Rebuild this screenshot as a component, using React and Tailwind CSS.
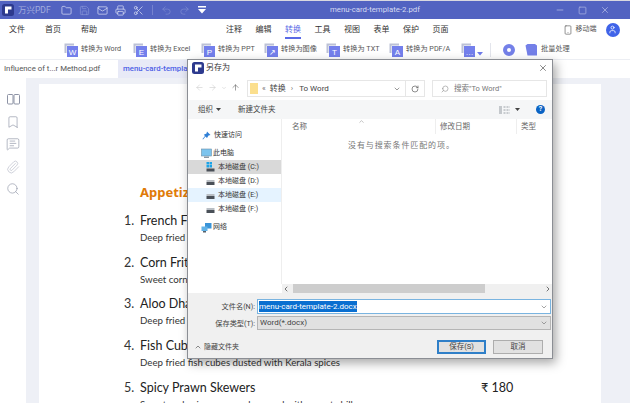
import {
  Bookmark,
  ChevronDown,
  ChevronLeft,
  ChevronRight,
  ChevronUp,
  Folder,
  Mail,
  MessageSquareText,
  Minus,
  Paperclip,
  Printer,
  Redo2,
  RotateCw,
  Save,
  Scissors,
  Search,
  Smartphone,
  Square,
  Undo2,
  User,
  X,
  ArrowLeft,
  ArrowRight,
  ArrowUp,
} from "lucide-react";

const UI_FONT = "font-['Roboto','Noto_Sans_CJK_SC',sans-serif]";

const leftMenu = ["文件", "首页", "帮助"];
const rightMenu = ["注释", "编辑", "转换", "工具", "视图", "表单", "保护", "页面"];

const tools = [
  { letter: "W", label: "转换为 Word", width: "w-[69px]" },
  { letter: "E", label: "转换为 Excel", width: "w-[68px]" },
  { letter: "P", label: "转换为 PPT", width: "w-[63px]" },
  { letter: "↗", label: "转换为图像", width: "w-[62px]" },
  { letter: "T", label: "转换为 TXT", width: "w-[63px]" },
  { letter: "A", label: "转换为 PDF/A", width: "w-[72px]" },
];

const menuItems = [
  { num: "1.", name: "French Fries", desc: "Deep fried potato fingers" },
  { num: "2.", name: "Corn Fritters", desc: "Sweet corn fritters" },
  { num: "3.", name: "Aloo Dhania", desc: "Deep fried potato with coriander" },
  { num: "4.", name: "Fish Cubes", desc: "Deep fried fish cubes dusted with Kerala spices" },
  {
    num: "5.",
    name: "Spicy Prawn Skewers",
    desc: "Sweet and spicy prawns skewered with sweet chilly sauce",
    price: "180",
  },
];

function ConvertIcon({ letter }) {
  return (
    <svg width="14" height="14" viewBox="0 0 14 14" className="shrink-0">
      <path d="M0.5 0.5H10V2.5H2.5V10H0.5Z" fill="#bcc1d6" />
      <rect x="3" y="3" width="11" height="11" fill="#7480ec" />
      <text x="8.5" y="12" fontSize="8" fill="#fff" textAnchor="middle" fontFamily="Liberation Sans">
        {letter}
      </text>
    </svg>
  );
}

function AppLogo() {
  return (
    <svg width="12" height="12" viewBox="0 0 12 12" className="shrink-0">
      <rect width="12" height="12" rx="2.5" fill="#2d3a8e" />
      <path d="M3 2.5H9.5V5.5H6V9.5H3Z" fill="#fff" />
    </svg>
  );
}

function DriveIcon() {
  return (
    <svg width="9" height="9" viewBox="0 0 9 9" className="shrink-0">
      <rect x="0.5" y="3" width="8" height="2" fill="#b9bec4" />
      <rect x="0.5" y="5" width="8" height="3" fill="#4a5058" />
    </svg>
  );
}

function SystemDriveIcon() {
  return (
    <svg width="9" height="10" viewBox="0 0 9 10" className="shrink-0">
      <rect x="0.5" y="0" width="2.5" height="2.5" fill="#1aa3e8" />
      <rect x="3.5" y="0" width="2.5" height="2.5" fill="#1aa3e8" />
      <rect x="0.5" y="3" width="2.5" height="2.5" fill="#1aa3e8" />
      <rect x="3.5" y="3" width="2.5" height="2.5" fill="#1aa3e8" />
      <rect x="0.5" y="6.5" width="8" height="3" fill="#4a5058" />
    </svg>
  );
}

function ComputerIcon() {
  return (
    <svg width="11" height="11" viewBox="0 0 11 11" className="shrink-0">
      <rect x="0.5" y="1" width="10" height="7" fill="#7cc4ee" stroke="#6c8fa8" strokeWidth="0.6" />
      <rect x="3" y="8.5" width="5" height="1.5" fill="#8a98a5" />
    </svg>
  );
}

function NetworkIcon() {
  return (
    <svg width="11" height="11" viewBox="0 0 11 11" className="shrink-0">
      <rect x="4" y="1" width="6.5" height="5.5" fill="#3a94d8" />
      <rect x="0.5" y="4.5" width="6" height="4.5" fill="#62b2e6" />
      <rect x="2" y="9" width="3" height="1.5" fill="#55606a" />
    </svg>
  );
}

function PinIcon() {
  return (
    <svg width="9" height="9" viewBox="0 0 9 9" className="shrink-0">
      <path d="M5 0.5L8.5 4L6.5 4.5L5 7L3.5 5.5L1 8.5L0.5 8L3 5L1.8 3.8L4.5 2.5Z" fill="#2f7fd6" />
    </svg>
  );
}

function ViewsIcon() {
  return (
    <svg width="11" height="8" viewBox="0 0 11 8">
      <path d="M0 0H3V8H0Z" fill="#c4c8cc" />
      <path d="M4.5 1H11M4.5 4H11M4.5 7H11" stroke="#9aa0a6" strokeDasharray="2 1" />
    </svg>
  );
}

function TreeRow({ icon, label, indent, gap = "gap-[3px]", bg = "", className = "" }) {
  return (
    <div className={`flex h-[14px] items-center ${gap} ${indent} ${bg} ${className}`}>
      {icon}
      <span className="whitespace-nowrap text-[7px] leading-[14px] text-[#333]">{label}</span>
    </div>
  );
}

function TitleBar() {
  const iconClass = "h-[11px] w-[11px] text-[#dfe3f6]";
  return (
    <div className="flex h-[18px] items-center bg-[#5263c1] px-[2px]">
      <AppLogo />
      <span className="ml-[4px] w-[30px] whitespace-nowrap text-[8.5px] text-[#a3adde]">万兴PDF</span>
      <div className="ml-[13px] flex items-center gap-[7px]">
        <Folder className={iconClass} strokeWidth={1.5} />
        <Save className="h-[11px] w-[11px] text-[#8996d8]" strokeWidth={1.5} />
        <Mail className={iconClass} strokeWidth={1.5} />
        <Printer className={iconClass} strokeWidth={1.5} />
        <Scissors className={iconClass} strokeWidth={1.5} />
      </div>
      <div className="ml-[8px] h-[10px] w-px bg-[#7582cf]" />
      <div className="ml-[8px] flex items-center gap-[7px]">
        <Undo2 className="h-[11px] w-[11px] text-[#7f8cd2]" strokeWidth={1.5} />
        <Redo2 className="h-[11px] w-[11px] text-[#7f8cd2]" strokeWidth={1.5} />
      </div>
      <svg width="10" height="9" viewBox="0 0 10 9" className="ml-[7px]">
        <path d="M1 0H9V1.5H1ZM1 3H9L5 7.5Z" fill="#fff" />
      </svg>
      <span className="ml-[123px] w-[225px] text-[7.8px] text-[#d5daf2]">menu-card-template-2.pdf</span>
      <div className="flex items-center gap-[13px] text-[#a9b2e2]">
        <Minus className="h-[10px] w-[10px]" />
        <Square className="h-[9px] w-[9px]" />
        <X className="h-[10px] w-[10px]" />
      </div>
    </div>
  );
}

function MenuBar() {
  return (
    <div className="flex h-[21px] items-center pl-[9px] text-[8px] text-[#333]">
      <div className="flex gap-[20px]">
        {leftMenu.map((m) => (
          <span key={m}>{m}</span>
        ))}
      </div>
      <div className="ml-[129px] flex gap-[13.5px]">
        {rightMenu.map((m) =>
          m === "转换" ? (
            <span key={m} className="relative text-[#5a6ae6]">
              {m}
              <span className="absolute -bottom-[3px] left-0 h-[1.5px] w-full bg-[#5a6ae6]" />
            </span>
          ) : (
            <span key={m}>{m}</span>
          ),
        )}
      </div>
      <Smartphone className="ml-[114px] h-[10px] w-[10px] text-[#555]" strokeWidth={1.5} />
      <span className="ml-[3px] text-[7px] text-[#555]">移动端</span>
      <div className="ml-[9px] flex h-[14px] w-[14px] items-center justify-center rounded-full bg-[#3f63e8]">
        <User className="h-[9px] w-[9px] text-white" strokeWidth={2} />
      </div>
    </div>
  );
}

function ToolBar() {
  return (
    <div className="flex h-[20px] items-center border-b border-[#eceef3] pl-[64px] text-[7.2px] text-[#555]">
      {tools.map((t) => (
        <div key={t.label} className={`flex items-center gap-[3px] ${t.width}`}>
          <ConvertIcon letter={t.letter} />
          <span className="whitespace-nowrap">{t.label}</span>
        </div>
      ))}
      <ConvertIcon letter="…" />
      <svg width="6" height="4" viewBox="0 0 6 4" className="ml-[2px] mt-[9px]">
        <path d="M0 0H6L3 3.5Z" fill="#6f7bea" />
      </svg>
      <div className="ml-[7px] h-[14px] w-px bg-[#e3e5ec]" />
      <svg width="12" height="12" viewBox="0 0 12 12" className="ml-[12px]">
        <circle cx="6" cy="6" r="4" fill="none" stroke="#7480e8" strokeWidth="4" />
      </svg>
      <svg width="12" height="12" viewBox="0 0 12 12" className="ml-[10px]">
        <path d="M0.5 1.5L2.5 0H10L12 1.5V11.5H2.5Z" fill="#7480e8" />
      </svg>
      <span className="ml-[4px]">批量处理</span>
    </div>
  );
}

function TabRow() {
  return (
    <div className="flex h-[18px] items-center text-[7.8px]">
      <div className="flex h-full w-[118px] items-center bg-white pl-[4px] text-[#555]">
        Influence of t...r Method.pdf
      </div>
      <div className="flex h-full w-[120px] items-center overflow-hidden whitespace-nowrap bg-[#e8eaf7] pl-[5px] font-medium text-[#4d5fe6]">
        menu-card-template-2.pdf
      </div>
      <div className="h-full flex-1 bg-white" />
    </div>
  );
}

function SideBar() {
  const cls = "h-[14px] w-[14px] text-[#8d93a5]";
  return (
    <div className="flex w-[26px] flex-col items-center gap-[8.5px] bg-white pt-[14px]">
      <svg width="13" height="14" viewBox="0 0 13 14" fill="none" stroke="#8d93a5">
        <rect x="0.5" y="2.5" width="5.5" height="9.5" rx="1" />
        <rect x="7" y="2.5" width="5.5" height="9.5" rx="1" />
      </svg>
      <Bookmark className={cls} strokeWidth={1.1} />
      <MessageSquareText className={cls} strokeWidth={1.1} />
      <Paperclip className="h-[14px] w-[14px] text-[#b5b9c6]" strokeWidth={1.1} />
      <Search className={cls} strokeWidth={1.1} />
    </div>
  );
}

function PdfPage() {
  return (
    <div className="h-[319px] flex-1 overflow-hidden bg-white pl-[85px] pr-[50px] pt-[100px] font-['Lato',sans-serif]">
      <div className="pl-[16px] font-['Noto_Sans',sans-serif] text-[13px] font-bold leading-[17px] text-[#df7a08]">
        Appetizers
      </div>
      <div className="mt-[11px] flex flex-col">
        {menuItems.map((item) => (
          <div key={item.num} className="flex h-[41.7px] gap-[8px]">
            <span className="w-[8px] text-[12.5px] leading-[18px] text-[#333]">{item.num}</span>
            <div className="flex-1">
              <div className="flex justify-between text-[12.5px] leading-[18px] text-[#222]">
                <span>{item.name}</span>
                {item.price && <span className="w-[70px]">₹ {item.price}</span>}
              </div>
              <div className="whitespace-nowrap text-[9.7px] leading-[14px] text-[#333]">{item.desc}</div>
            </div>
          </div>
        ))}
      </div>
    </div>
  );
}

function SaveDialog() {
  return (
    <div className="absolute left-[187px] top-[58px] flex h-[300px] w-[366px] flex-col border border-[#8b8e94] bg-white text-[#333] shadow-[3px_4px_10px_rgba(0,0,0,0.35)]">
      {/* title */}
      <div className="flex h-[20px] items-start px-[4px] pt-[2px]">
        <AppLogo />
        <span className="ml-[2px] text-[8px] leading-[12px] text-[#333]">另存为</span>
        <X className="ml-auto mt-[1px] h-[10px] w-[10px] text-[#444]" strokeWidth={1.5} />
      </div>
      {/* nav */}
      <div className="flex h-[20px] items-start">
        <div className="flex w-[59px] items-center gap-[4px] pl-[7px] pt-[3px]">
          <ArrowLeft className="h-[9px] w-[9px] text-[#c9c9c9]" strokeWidth={1.5} />
          <ArrowRight className="h-[9px] w-[9px] text-[#c9c9c9]" strokeWidth={1.5} />
          <ChevronDown className="h-[6px] w-[6px] text-[#c9c9c9]" />
          <ArrowUp className="h-[9px] w-[9px] text-[#555]" strokeWidth={1.5} />
        </div>
        <div className="flex h-[17px] w-[178px] items-center border border-[#e6e6e6] pl-[2px] text-[8px] text-[#444]">
          <div className="h-[11px] w-[8px] bg-[#fbdf8e]" />
          <span className="ml-[4px] text-[#777]">«</span>
          <span className="ml-[4px]">转换</span>
          <span className="ml-[5px] text-[#777]">›</span>
          <span className="ml-[6px]">To Word</span>
          <ChevronDown className="ml-auto h-[8px] w-[8px] text-[#666]" />
          <div className="ml-[4px] flex h-full w-[19px] items-center justify-center border-l border-[#e6e6e6]">
            <RotateCw className="h-[8px] w-[8px] text-[#555]" />
          </div>
        </div>
        <div className="ml-[7px] flex h-[17px] w-[115px] items-center gap-[5px] border border-[#e6e6e6] pl-[8px] text-[7.5px] text-[#777]">
          <Search className="h-[8px] w-[8px] -scale-x-100 text-[#999]" />
          <span>搜索"To Word"</span>
        </div>
      </div>
      {/* command bar */}
      <div className="flex h-[19px] items-center bg-[#f5f6f7] pl-[10px] pr-[7px] text-[7.5px] text-[#444]">
        <span>组织</span>
        <svg width="5" height="3" viewBox="0 0 5 3" className="ml-[3px]">
          <path d="M0 0H5L2.5 3Z" fill="#444" />
        </svg>
        <span className="ml-[17px]">新建文件夹</span>
        <div className="ml-auto">
          <ViewsIcon />
        </div>
        <svg width="5" height="3" viewBox="0 0 5 3" className="ml-[5px]">
          <path d="M0 0H5L2.5 3Z" fill="#444" />
        </svg>
        <div className="ml-[16px] flex h-[9px] w-[9px] items-center justify-center rounded-full bg-[#0a63c4] text-[7px] font-bold leading-none text-white">
          ?
        </div>
      </div>
      {/* main */}
      <div className="flex h-[174px] flex-col">
        <div className="flex h-[165px]">
          <div className="w-[94px] border-r border-[#eeeeee] pt-[9px]">
            <TreeRow icon={<PinIcon />} label="快速访问" indent="pl-[14px]" />
            <TreeRow icon={<ComputerIcon />} label="此电脑" indent="pl-[13px]" gap="gap-[1px]" className="mt-[4px]" />
            <TreeRow icon={<SystemDriveIcon />} label="本地磁盘 (C:)" indent="pl-[18px]" bg="bg-[#d9d9d9]" />
            <TreeRow icon={<DriveIcon />} label="本地磁盘 (D:)" indent="pl-[18px]" />
            <TreeRow icon={<DriveIcon />} label="本地磁盘 (E:)" indent="pl-[18px]" bg="bg-[#e5f3ff]" />
            <TreeRow icon={<DriveIcon />} label="本地磁盘 (F:)" indent="pl-[18px]" />
            <TreeRow icon={<NetworkIcon />} label="网络" indent="pl-[13px]" gap="gap-[1px]" className="mt-[4px]" />
          </div>
          <div className="flex-1">
            <div className="flex h-[15px] items-center text-[7.5px] text-[#666]">
              <div className="relative flex h-full w-[154px] items-center border-r border-[#eeeeee] pl-[10px]">
                名称
                <ChevronUp className="absolute left-[76px] top-[-1px] h-[7px] w-[7px] text-[#999]" />
              </div>
              <div className="flex h-full w-[81px] items-center border-r border-[#eeeeee] pl-[4px]">修改日期</div>
              <div className="pl-[4px]">类型</div>
            </div>
            <div className="mt-[6px] whitespace-nowrap pl-[66px] text-[8px] tracking-[0.9px] text-[#777]">
              没有与搜索条件匹配的项。
            </div>
          </div>
        </div>
        <div className="flex h-[9px] items-center">
          <div className="w-[94px]" />
          <div className="flex h-full flex-1 items-center bg-[#f0f0f0]">
            <ChevronLeft className="h-[8px] w-[8px] text-[#333]" />
            <div className="ml-[3px] h-full w-[192px] bg-[#cdcdcd]" />
            <ChevronRight className="ml-auto h-[8px] w-[8px] text-[#333]" />
          </div>
        </div>
      </div>
      {/* footer */}
      <div className="flex flex-1 flex-col bg-[#f0f0f0] text-[7.2px] text-[#444]">
        <div className="mt-[6px] flex h-[15px] items-center">
          <span className="w-[67px] whitespace-nowrap text-right leading-[11px]">文件名(N):</span>
          <div className="ml-[2px] flex h-full w-[294px] items-center border border-[#7ab4e0] bg-white pl-[1px] pr-[2px]">
            <span className="bg-[#0a6fd0] text-[8px] leading-[11px] text-white">menu-card-template-2.docx</span>
            <ChevronDown className="ml-auto h-[8px] w-[8px] text-[#777]" />
          </div>
        </div>
        <div className="mt-[2px] flex h-[14px] items-center">
          <span className="w-[67px] whitespace-nowrap text-right leading-[11px]">保存类型(T):</span>
          <div className="ml-[2px] flex h-full w-[294px] items-center border border-[#b5b5b5] bg-[#e1e1e1] px-[2px] text-[8px]">
            Word(*.docx)
            <ChevronDown className="ml-auto h-[8px] w-[8px] text-[#777]" />
          </div>
        </div>
        <div className="mt-[10px] flex items-center pl-[6px] pr-[9px]">
          <ChevronUp className="h-[8px] w-[8px] text-[#555]" />
          <span className="ml-[2px] text-[7px]">隐藏文件夹</span>
          <button className="ml-auto flex h-[14px] w-[49px] items-center justify-center border-2 border-[#2f7fc8] bg-[#e1e1e1] text-[7.5px] text-[#444]">
            保存(S)
          </button>
          <button className="ml-[7px] flex h-[14px] w-[50px] items-center justify-center border border-[#adadad] bg-[#e1e1e1] text-[7.5px] text-[#444]">
            取消
          </button>
        </div>
      </div>
    </div>
  );
}

export default function App() {
  return (
    <div className={`relative h-[403px] w-[630px] overflow-hidden border-t border-[#d8d8e0] bg-white ${UI_FONT}`}>
      <TitleBar />
      <MenuBar />
      <ToolBar />
      <TabRow />
      <div className="flex bg-[#eef0f6]">
        <SideBar />
        <div className="flex flex-1 pl-[13px] pr-[29px] pt-[6px]">
          <PdfPage />
        </div>
      </div>
      <SaveDialog />
    </div>
  );
}
